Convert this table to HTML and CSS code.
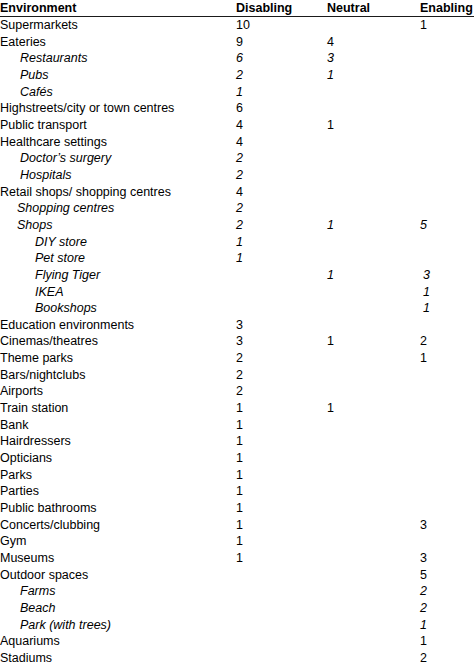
FILE: index.html
```html
<!DOCTYPE html>
<html lang="en">
<head>
<meta charset="utf-8">
<title>Environments</title>
<link rel="stylesheet" href="styles.css">
</head>
<body>
<table class="env">
  <colgroup>
    <col class="c-env"><col class="c-dis"><col class="c-neu"><col class="c-ena">
  </colgroup>
  <thead>
    <tr><th>Environment</th><th>Disabling</th><th>Neutral</th><th>Enabling</th></tr>
  </thead>
  <tbody>
    <tr><td>Supermarkets</td><td>10</td><td></td><td>1</td></tr>
    <tr><td>Eateries</td><td>9</td><td>4</td><td></td></tr>
    <tr class="sub"><td class="l1">Restaurants</td><td>6</td><td>3</td><td></td></tr>
    <tr class="sub"><td class="l1">Pubs</td><td>2</td><td>1</td><td></td></tr>
    <tr class="sub"><td class="l1">Cafés</td><td>1</td><td></td><td></td></tr>
    <tr><td>Highstreets/city or town centres</td><td>6</td><td></td><td></td></tr>
    <tr><td>Public transport</td><td>4</td><td>1</td><td></td></tr>
    <tr><td>Healthcare settings</td><td>4</td><td></td><td></td></tr>
    <tr class="sub"><td class="l1">Doctor’s surgery</td><td>2</td><td></td><td></td></tr>
    <tr class="sub"><td class="l1">Hospitals</td><td>2</td><td></td><td></td></tr>
    <tr><td>Retail shops/ shopping centres</td><td>4</td><td></td><td></td></tr>
    <tr class="sub"><td class="l1b">Shopping centres</td><td>2</td><td></td><td></td></tr>
    <tr class="sub"><td class="l1b">Shops</td><td>2</td><td>1</td><td>5</td></tr>
    <tr class="sub"><td class="l2">DIY store</td><td>1</td><td></td><td></td></tr>
    <tr class="sub"><td class="l2">Pet store</td><td>1</td><td></td><td></td></tr>
    <tr class="sub"><td class="l2">Flying Tiger</td><td></td><td>1</td><td class="shift">3</td></tr>
    <tr class="sub"><td class="l2">IKEA</td><td></td><td></td><td class="shift">1</td></tr>
    <tr class="sub"><td class="l2">Bookshops</td><td></td><td></td><td class="shift">1</td></tr>
    <tr><td>Education environments</td><td>3</td><td></td><td></td></tr>
    <tr><td>Cinemas/theatres</td><td>3</td><td>1</td><td>2</td></tr>
    <tr><td>Theme parks</td><td>2</td><td></td><td>1</td></tr>
    <tr><td>Bars/nightclubs</td><td>2</td><td></td><td></td></tr>
    <tr><td>Airports</td><td>2</td><td></td><td></td></tr>
    <tr><td>Train station</td><td>1</td><td>1</td><td></td></tr>
    <tr><td>Bank</td><td>1</td><td></td><td></td></tr>
    <tr><td>Hairdressers</td><td>1</td><td></td><td></td></tr>
    <tr><td>Opticians</td><td>1</td><td></td><td></td></tr>
    <tr><td>Parks</td><td>1</td><td></td><td></td></tr>
    <tr><td>Parties</td><td>1</td><td></td><td></td></tr>
    <tr><td>Public bathrooms</td><td>1</td><td></td><td></td></tr>
    <tr><td>Concerts/clubbing</td><td>1</td><td></td><td>3</td></tr>
    <tr><td>Gym</td><td>1</td><td></td><td></td></tr>
    <tr><td>Museums</td><td>1</td><td></td><td>3</td></tr>
    <tr><td>Outdoor spaces</td><td></td><td></td><td>5</td></tr>
    <tr class="sub"><td class="l1">Farms</td><td></td><td></td><td>2</td></tr>
    <tr class="sub"><td class="l1">Beach</td><td></td><td></td><td>2</td></tr>
    <tr class="sub"><td class="l1">Park (with trees)</td><td></td><td></td><td>1</td></tr>
    <tr><td>Aquariums</td><td></td><td></td><td>1</td></tr>
    <tr><td>Stadiums</td><td></td><td></td><td>2</td></tr>
  </tbody>
</table>
</body>
</html>
```

FILE: styles.css
```css
html, body {
  margin: 0;
  padding: 0;
  background: #fff;
}

body {
  font-family: "Liberation Sans", Arial, sans-serif;
  font-size: 12.5px;
  color: #000;
  overflow: hidden;
}

.env {
  border-collapse: collapse;
  table-layout: fixed;
  width: 490px;
}

.c-env { width: 236px; }
.c-dis { width: 91px; }
.c-neu { width: 93px; }
.c-ena { width: 70px; }

.env th,
.env td {
  padding: 0;
  text-align: left;
  white-space: nowrap;
  vertical-align: middle;
}

.env th {
  font-weight: bold;
  height: 16px;
  line-height: 16px;
  border-bottom: 1.5px solid #1a1a1a;
}

.env td {
  height: 16.66px;
  line-height: 16.66px;
}

.sub td {
  font-style: italic;
}

.env td.l1 { padding-left: 20px; }
.env td.l1b { padding-left: 17px; }
.env td.l2 { padding-left: 35px; }
.env td.shift { padding-left: 3px; }
```
